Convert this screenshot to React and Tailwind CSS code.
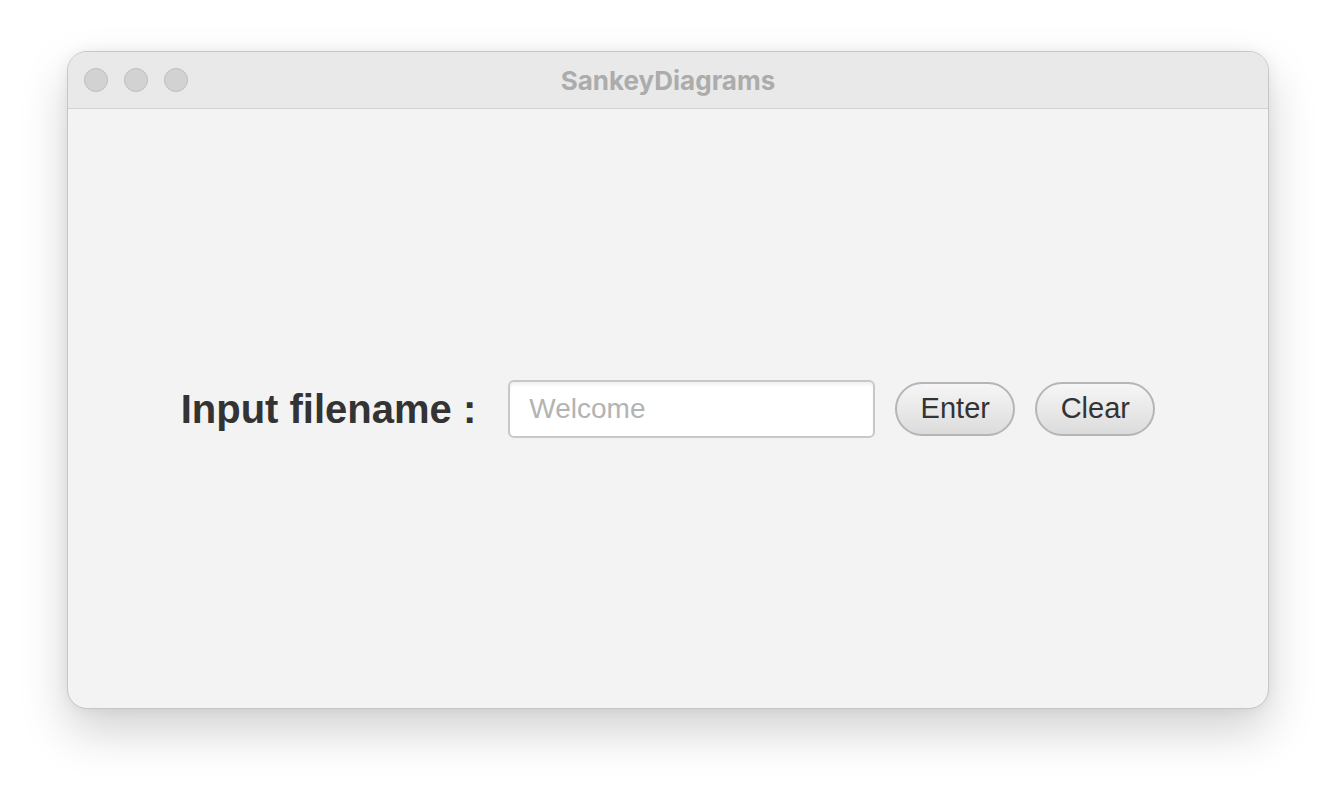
import React from "react";

export default function App() {
  return (
    <div className="w-[1336px] h-[792px] bg-white pt-[51px] pl-[67px] font-['Liberation_Sans',Arial,sans-serif]">
      <div className="w-[1202px] h-[658px] rounded-[20px] border border-[#c6c6c6] bg-[#f3f3f3] overflow-hidden flex flex-col shadow-[0_22px_48px_rgba(0,0,0,0.18),0_0_14px_rgba(0,0,0,0.06)]">
        <div className="relative h-[57px] shrink-0 bg-[#e9e9e9] border-b border-[#d2d2d2] flex items-center pl-[16px]">
          <div className="flex gap-[16px]">
            <div className="w-[24px] h-[24px] rounded-full bg-[#d2d2d2] border border-[#bdbdbd]" />
            <div className="w-[24px] h-[24px] rounded-full bg-[#d2d2d2] border border-[#bdbdbd]" />
            <div className="w-[24px] h-[24px] rounded-full bg-[#d2d2d2] border border-[#bdbdbd]" />
          </div>
          <div className="absolute inset-0 flex items-center justify-center pointer-events-none">
            <span className="text-[26px] font-bold text-[#acacac] tracking-[0px] font-['Inter','Liberation_Sans',sans-serif]">SankeyDiagrams</span>
          </div>
        </div>
        <div className="flex-1 flex items-center justify-center">
          <div className="flex items-center">
            <span className="text-[40px] font-bold text-[#333333] mr-[32px] leading-none">Input filename :</span>
            <div className="w-[367px] h-[58px] rounded-[6px] border-2 border-[#c8c8c8] bg-white shadow-[inset_0_3px_3px_rgba(0,0,0,0.05)] flex items-center pl-[19px] mr-[20px]">
              <span className="text-[28px] text-[#b3b3b3]">Welcome</span>
            </div>
            <button className="w-[120px] h-[54px] rounded-full border-2 border-[#b5b5b5] bg-gradient-to-b from-[#f6f6f6] to-[#dcdcdc] text-[29px] text-[#333333] flex items-center justify-center mr-[20px]">Enter</button>
            <button className="w-[120px] h-[54px] rounded-full border-2 border-[#b5b5b5] bg-gradient-to-b from-[#f6f6f6] to-[#dcdcdc] text-[29px] text-[#333333] flex items-center justify-center">Clear</button>
          </div>
        </div>
      </div>
    </div>
  );
}
